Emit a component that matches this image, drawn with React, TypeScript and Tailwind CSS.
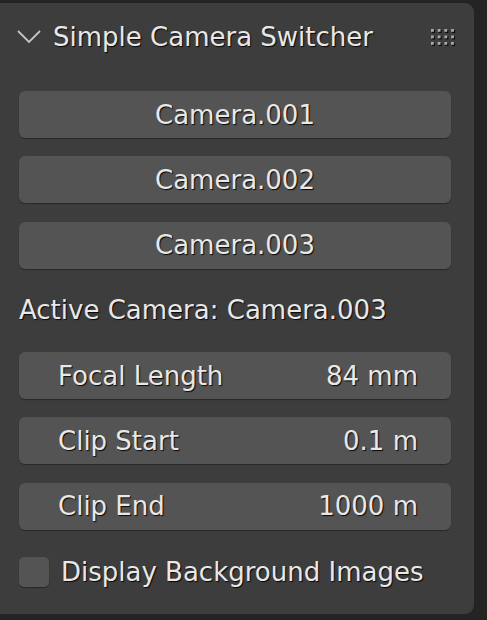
import React from 'react';

const cameras = ['Camera.001', 'Camera.002', 'Camera.003'];

const fields = [
  { label: 'Focal Length', value: '84 mm' },
  { label: 'Clip Start', value: '0.1 m' },
  { label: 'Clip End', value: '1000 m' },
];

const txt = 'text-[#e8e8e8] [text-shadow:1px_1px_1px_rgba(0,0,0,0.9)]';

const GripDots: React.FC = () => (
  <svg width="26" height="17" viewBox="0 0 26 17" className="block">
    {[0, 1, 2].map((r) =>
      [0, 1, 2, 3].map((c) => (
        <g key={`${r}-${c}`}>
          <rect x={c * 6.7 + 1} y={r * 6.5 + 1} width="3" height="3" fill="#0e0e0e" />
          <rect x={c * 6.7} y={r * 6.5} width="2.8" height="2.8" fill="#a8a8a8" />
        </g>
      ))
    )}
  </svg>
);

export default function App() {
  return (
    <div
      className="w-[487px] h-[620px] bg-[#242424] pt-[3px] overflow-hidden"
      style={{ fontFamily: '"DejaVu Sans", "Liberation Sans", sans-serif' }}
    >
      <div className="w-[474px] h-[611px] bg-[#3d3d3d] rounded-r-[9px] pl-[19px] pr-[23px]">
        {/* header */}
        <div className="h-[68px] flex items-center">
          <svg width="26" height="16" viewBox="0 0 26 16" className="-ml-[3px] mr-[11px]">
            <path d="M2 2 L13 13 L24 2" fill="none" stroke="#c4c4c4" strokeWidth="1.8" />
          </svg>
          <span className={`text-[26px] leading-none ${txt}`}>Simple Camera Switcher</span>
          <div className="ml-auto -mr-[6px] mt-[1px]">
            <GripDots />
          </div>
        </div>

        <div className="pt-[20px] flex flex-col gap-[18.3px]">
          {cameras.map((c) => (
            <div
              key={c}
              className={`h-[47px] rounded-[6px] bg-[#545454] shadow-[0_1px_1px_rgba(0,0,0,0.35)] flex items-center justify-center text-[26px] leading-none ${txt}`}
            >
              {c}
            </div>
          ))}

          <div className={`h-[47px] flex items-center text-[26px] leading-none ${txt}`}>
            Active Camera: Camera.003
          </div>

          {fields.map((f) => (
            <div
              key={f.label}
              className={`h-[47px] rounded-[6px] bg-[#545454] shadow-[0_1px_1px_rgba(0,0,0,0.35)] flex items-center justify-between pl-[39px] pr-[33px] text-[26px] leading-none ${txt}`}
            >
              <span>{f.label}</span>
              <span>{f.value}</span>
            </div>
          ))}

          <div className="h-[47px] flex items-center">
            <div className="w-[30px] h-[30px] rounded-[5px] bg-[#545454] shadow-[0_1px_1px_rgba(0,0,0,0.35)] mr-[12px]" />
            <span className={`text-[26px] leading-none ${txt}`}>Display Background Images</span>
          </div>
        </div>
      </div>
    </div>
  );
}
